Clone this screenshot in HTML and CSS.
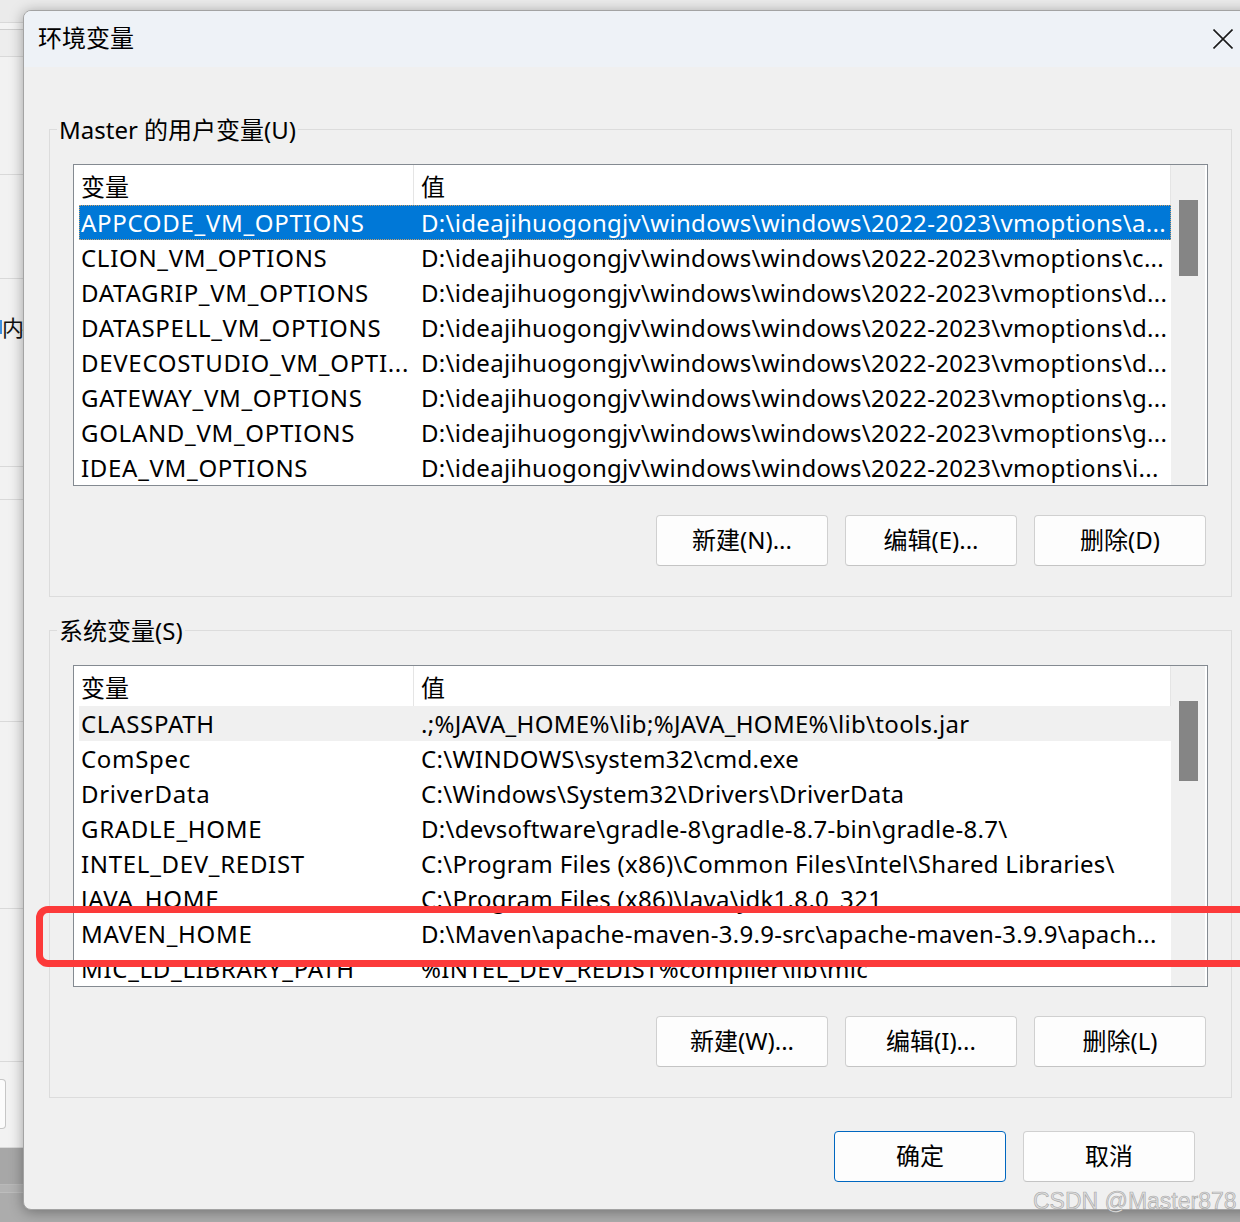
FILE: index.html
```html
<!DOCTYPE html>
<html lang="zh-CN">
<head>
<meta charset="utf-8">
<title>环境变量</title>
<link rel="stylesheet" href="styles.css">
</head>
<body>
<div class="desk">
  <div class="backwin">
    <div class="br br1"></div>
    <div class="br br2"></div>
    <div class="br br3"></div>
    <div class="br br4"></div>
    <div class="br br5"></div>
    <div class="br br6"><span class="caret"></span><span class="bw-text">内存</span></div>
    <div class="br br7"></div>
    <div class="br br8"></div>
    <div class="br br9"></div>
    <div class="br br10"></div>
    <div class="br br11"><div class="bw-btn"></div></div>
    <div class="br br12"></div>
    <div class="br br13"></div>
    <div class="br br14"></div>
  </div>

  <div class="dialog">
    <div class="titlebar">
      <span class="title">环境变量</span>
      <svg class="close" width="20" height="20" viewBox="0 0 20 20"><path d="M0.5 0.5 L19.5 19.5 M19.5 0.5 L0.5 19.5" stroke="#1b1b1b" stroke-width="1.6" fill="none"/></svg>
    </div>
    <div class="content">
      <div class="group">
        <div class="legend-row"><span class="legend">Master 的用户变量(U)</span></div>
        <div class="list">
          <div class="list-main">
            <div class="hdr"><div class="c-name hc">变量</div><div class="c-val">值</div></div>
            <div class="row sel"><div class="c-name">APPCODE_VM_OPTIONS</div><div class="c-val">D:\ideajihuogongjv\windows\windows\2022-2023\vmoptions\a...</div></div>
            <div class="row"><div class="c-name">CLION_VM_OPTIONS</div><div class="c-val">D:\ideajihuogongjv\windows\windows\2022-2023\vmoptions\c...</div></div>
            <div class="row"><div class="c-name">DATAGRIP_VM_OPTIONS</div><div class="c-val">D:\ideajihuogongjv\windows\windows\2022-2023\vmoptions\d...</div></div>
            <div class="row"><div class="c-name">DATASPELL_VM_OPTIONS</div><div class="c-val">D:\ideajihuogongjv\windows\windows\2022-2023\vmoptions\d...</div></div>
            <div class="row"><div class="c-name">DEVECOSTUDIO_VM_OPTI...</div><div class="c-val">D:\ideajihuogongjv\windows\windows\2022-2023\vmoptions\d...</div></div>
            <div class="row"><div class="c-name">GATEWAY_VM_OPTIONS</div><div class="c-val">D:\ideajihuogongjv\windows\windows\2022-2023\vmoptions\g...</div></div>
            <div class="row"><div class="c-name">GOLAND_VM_OPTIONS</div><div class="c-val">D:\ideajihuogongjv\windows\windows\2022-2023\vmoptions\g...</div></div>
            <div class="row"><div class="c-name">IDEA_VM_OPTIONS</div><div class="c-val">D:\ideajihuogongjv\windows\windows\2022-2023\vmoptions\i...</div></div>
          </div>
          <div class="scroll"><div class="thumb thumb-a"></div></div>
        </div>
        <div class="btnrow">
          <div class="btn">新建(N)...</div>
          <div class="btn">编辑(E)...</div>
          <div class="btn">删除(D)</div>
        </div>
      </div>

      <div class="group group2">
        <div class="legend-row"><span class="legend">系统变量(S)</span></div>
        <div class="list">
          <div class="list-main">
            <div class="hdr"><div class="c-name hc">变量</div><div class="c-val">值</div></div>
            <div class="row dim"><div class="c-name">CLASSPATH</div><div class="c-val">.;%JAVA_HOME%\lib;%JAVA_HOME%\lib\tools.jar</div></div>
            <div class="row"><div class="c-name">ComSpec</div><div class="c-val">C:\WINDOWS\system32\cmd.exe</div></div>
            <div class="row"><div class="c-name">DriverData</div><div class="c-val">C:\Windows\System32\Drivers\DriverData</div></div>
            <div class="row"><div class="c-name">GRADLE_HOME</div><div class="c-val">D:\devsoftware\gradle-8\gradle-8.7-bin\gradle-8.7\</div></div>
            <div class="row"><div class="c-name">INTEL_DEV_REDIST</div><div class="c-val">C:\Program Files (x86)\Common Files\Intel\Shared Libraries\</div></div>
            <div class="row"><div class="c-name">JAVA_HOME</div><div class="c-val">C:\Program Files (x86)\Java\jdk1.8.0_321</div></div>
            <div class="row"><div class="c-name">MAVEN_HOME</div><div class="c-val">D:\Maven\apache-maven-3.9.9-src\apache-maven-3.9.9\apach...</div></div>
            <div class="row"><div class="c-name">MIC_LD_LIBRARY_PATH</div><div class="c-val">%INTEL_DEV_REDIST%compiler\lib\mic</div></div>
          </div>
          <div class="scroll"><div class="thumb thumb-b"></div></div>
        </div>
        <div class="btnrow">
          <div class="btn">新建(W)...</div>
          <div class="btn">编辑(I)...</div>
          <div class="btn">删除(L)</div>
        </div>
      </div>

      <div class="footer">
        <div class="btn primary">确定</div>
        <div class="btn">取消</div>
      </div>
    </div>
  </div>

  <div class="redbox"></div>
  <div class="watermark">CSDN @Master878</div>
</div>
</body>
</html>
```

FILE: styles.css
```css
* { box-sizing: border-box; }
html, body { margin: 0; padding: 0; }
body {
  width: 1240px;
  height: 1222px;
  overflow: hidden;
  font-family: "Noto Sans", "Noto Sans CJK SC", sans-serif;
  color: #000;
}
.desk {
  position: relative;
  width: 1240px;
  height: 1222px;
  overflow: hidden;
  background: #aaaaaa;
}

/* background window */
.backwin {
  position: absolute;
  left: 0;
  top: 0;
  width: 1240px;
  height: 1222px;
  display: flex;
  flex-direction: column;
  background: #f2f2f2;
}
.br { border-bottom: 1px solid #d9d9d9; flex: none; position: relative; }
.br1 { height: 23px; background: #ebebeb; }
.br2 { height: 7px; background: #f4f4f4; border-bottom-color: #cfcfcf; }
.br3 { height: 27px; background: #ededed; }
.br4 { height: 118px; }
.br5 { height: 104px; }
.br6 { height: 188px; padding-top: 33px; display: flex; align-items: flex-start; }
.br7 { height: 33px; }
.br8 { height: 222px; }
.br9 { height: 187px; }
.br10 { height: 153px; }
.br11 { height: 86px; padding-top: 17px; }
.br12 { height: 37px; background: #a7a7a7; border-bottom-color: #b9b9b9; }
.br13 { height: 8px; background: #b3b3b3; border-bottom-color: #bdbdbd; }
.br14 { height: 40px; background: #acacac; border-bottom: none; }
.caret { width: 2px; height: 14px; margin-top: 8px; background: #3d8fe0; }
.bw-text { font-size: 22px; line-height: 30px; letter-spacing: -2px; color: #111; }
.bw-btn {
  width: 6px;
  height: 50px;
  border: 1px solid #c6c6c6;
  border-left: none;
  border-radius: 0 4px 4px 0;
  background: #fbfbfb;
}

/* dialog */
.dialog {
  position: absolute;
  left: 23px;
  top: 10px;
  width: 1240px;
  height: 1200px;
  background: #f0f0f0;
  border: 1px solid #a3a3a3;
  border-radius: 8px;
  overflow: hidden;
  box-shadow: 0 2px 14px rgba(0, 0, 0, 0.35);
}
.titlebar {
  height: 56px;
  background: #eef2f7;
  display: flex;
  align-items: center;
  justify-content: space-between;
  padding: 0 29px 0 14px;
}
.title { font-size: 24px; line-height: 30px; margin-top: -2px; }
.close { display: block; }

.content { padding-left: 25px; }
.group {
  width: 1183px;
  margin-top: 62px;
  border: 1px solid #dcdcdc;
  padding: 0 23px 30px 23px;
}
.group2 { margin-top: 33px; }
.legend-row {
  height: 30px;
  margin: -15px 0 0 -16px;
  display: flex;
}
.legend {
  background: #f0f0f0;
  padding: 0 2px;
  font-size: 24px;
  line-height: 30px;
  white-space: nowrap;
}

.list {
  margin-top: 19px;
  height: 322px;
  border: 1px solid #848a91;
  background: #fff;
  display: flex;
  overflow: hidden;
}
.list-main {
  width: 1097px;
  padding-left: 5px;
  overflow: hidden;
}
.scroll {
  width: 34px;
  margin-right: 1px;
  background: #f0f0f0;
  flex: none;
}
.thumb { margin: 35px 0 0 8px; width: 19px; background: #858585; }
.thumb-a { height: 76px; }
.thumb-b { height: 80px; }

.hdr, .row {
  display: grid;
  grid-template-columns: 335px 1fr;
  font-size: 24px;
  white-space: nowrap;
}
.hdr { height: 40px; line-height: 36px; padding-top: 4px; border-right: 1px solid #e5e5e5; }
.hdr .c-name, .hdr .c-val { letter-spacing: 0; }
.row { height: 35px; line-height: 35px; }
.c-name { padding-left: 2px; overflow: hidden; letter-spacing: 0.7px; }
.c-val { padding-left: 7px; overflow: hidden; letter-spacing: 0.3px; }
.hc { border-right: 1px solid #e5e5e5; margin-top: -4px; padding-top: 4px; }
.row.sel {
  background: #0078d7;
  color: #fff;
  outline: 1px dotted rgba(255, 170, 80, 0.8);
  outline-offset: -1px;
}
.row.dim { background: #f0f0f0; }

.btnrow {
  display: flex;
  justify-content: flex-end;
  gap: 17px;
  margin-top: 29px;
  padding-right: 2px;
}
.btn {
  width: 172px;
  height: 51px;
  border: 1px solid #d0d0d0;
  border-bottom-color: #c4c4c4;
  border-radius: 4px;
  background: #fdfdfd;
  font-size: 24px;
  line-height: 30px;
  padding-bottom: 2px;
  display: flex;
  align-items: center;
  justify-content: center;
  white-space: nowrap;
}
.footer {
  width: 1183px;
  display: flex;
  justify-content: flex-end;
  gap: 17px;
  margin-top: 33px;
  padding-right: 37px;
}
.btn.primary { border: 1px solid #0067c0; }

/* annotation overlay */
.redbox {
  position: absolute;
  left: 36px;
  top: 906px;
  width: 1240px;
  height: 61px;
  border: 7px solid #fc3a3a;
  border-radius: 12px;
}
.watermark {
  position: absolute;
  left: 1033px;
  top: 1186px;
  font-family: "Liberation Sans", Arial, sans-serif;
  font-size: 23px;
  line-height: 30px;
  color: #dcdcdc;
  -webkit-text-stroke: 0.6px rgba(110, 110, 110, 0.55);
  white-space: nowrap;
}
```
